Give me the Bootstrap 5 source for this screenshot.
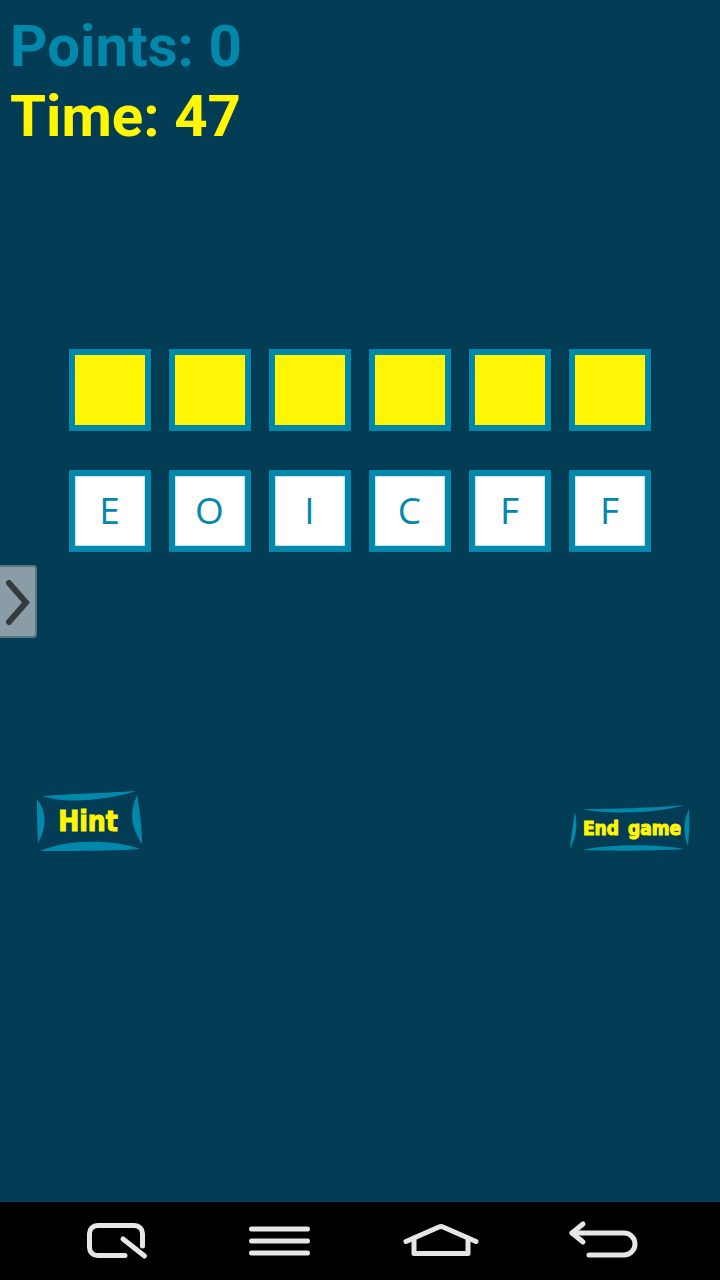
<!DOCTYPE html>
<html lang="en">
<head>
<meta charset="utf-8">
<title>Word game</title>
<link href="https://cdn.jsdelivr.net/npm/bootstrap@5.3.0/dist/css/bootstrap.min.css" rel="stylesheet">
<style>
html, body { height: 100%; }
body { background: #033d55; overflow: hidden; }
.game-screen { height: 1280px; position: relative; }
.game-main { min-height: 0; }
.score-box { padding: 11px 0 0 10px; font-family: Roboto, "Liberation Sans", sans-serif; font-weight: 700; font-size: 58.2px; line-height: 70px; }
.score-points { color: #0288ab; }
.score-time { color: #fff505; }
.tile-rows { margin-top: 198px; }
.tile-row + .tile-row { margin-top: 39px; }
.tile-gap { gap: 18px; }
.tile { width: 82px; height: 82px; border: 6px solid #0288ab; }
.tile-slot { background: #fff505; }
.tile-letter { background: #fff; color: #0288ab; font-family: "Open Sans", "Noto Sans", sans-serif; font-size: 37px; line-height: 1; padding: 0 1px 4px 0; box-shadow: inset 0 0 1px 1px rgba(2,136,171,.25); }
.drawer-tab { position: absolute; left: -3px; top: 565px; width: 40px; height: 73px; background: #8a9da6; border: 2px solid #5c7582; border-radius: 4px; }
.action-row { margin-top: 239px; padding: 0 30px 0 37px; }
.swoosh-btn { position: relative; padding: 0; border: 0; background: none; color: #fff505; font-family: "DejaVu Sans Condensed", "DejaVu Sans", sans-serif; font-weight: 700; -webkit-text-stroke: 1px #fff505; }
.swoosh-btn svg { position: absolute; inset: 0; }
.swoosh-btn svg path { fill: #0288ab; }
.btn-hint { width: 106px; height: 61px; font-size: 28px; line-height: 61px; padding-right: 4px; }
.btn-end { width: 120px; height: 48px; font-size: 19px; line-height: 48px; padding-left: 4px; word-spacing: 3px; }
.sys-bar { height: 78px; background: #000; }
.sys-item { width: 162px; }
.sys-item svg { fill: none; stroke: #e6e6e6; stroke-width: 5; stroke-linecap: round; stroke-linejoin: round; }
</style>
</head>
<body>
<div class="game-screen d-flex flex-column">
  <main class="game-main flex-grow-1">
    <div class="score-box">
      <div class="score-points">Points: 0</div>
      <div class="score-time">Time: 47</div>
    </div>
    <div class="tile-rows">
      <div class="tile-row d-flex justify-content-center tile-gap">
        <div class="tile tile-slot"></div><div class="tile tile-slot"></div><div class="tile tile-slot"></div>
        <div class="tile tile-slot"></div><div class="tile tile-slot"></div><div class="tile tile-slot"></div>
      </div>
      <div class="tile-row d-flex justify-content-center tile-gap">
        <div class="tile tile-letter d-flex align-items-center justify-content-center">E</div>
        <div class="tile tile-letter d-flex align-items-center justify-content-center">O</div>
        <div class="tile tile-letter d-flex align-items-center justify-content-center">I</div>
        <div class="tile tile-letter d-flex align-items-center justify-content-center">C</div>
        <div class="tile tile-letter d-flex align-items-center justify-content-center">F</div>
        <div class="tile tile-letter d-flex align-items-center justify-content-center">F</div>
      </div>
    </div>
    <div class="action-row d-flex justify-content-between align-items-end">
      <button type="button" class="swoosh-btn btn-hint">
        <svg width="106" height="61" viewBox="0 0 106 61"><path d="M5 5C30 3 70 2 99 0C75 8 30 14 5 5Z"/><path d="M0 8C10 20 10 36 1 52C0 36 0 22 0 8Z"/><path d="M100 4C92 22 94 36 105 53C105 36 103 20 100 4Z"/><path d="M3 60C30 48 75 48 103 58C75 60 30 60 3 60Z"/></svg>
        <span class="position-relative">Hint</span>
      </button>
      <button type="button" class="swoosh-btn btn-end">
        <svg width="120" height="48" viewBox="0 0 120 48"><path d="M12 5C40 5 85 4 114 1C90 9 40 11 12 5Z"/><path d="M5 8C8 22 6 34 0 45C1 32 3 20 5 8Z"/><path d="M119 5C113 18 113 30 118 42C119 30 120 18 119 5Z"/><path d="M13 46C40 40 85 40 114 45C85 47 40 47 13 46Z"/></svg>
        <span class="position-relative">End game</span>
      </button>
    </div>
  </main>
  <div class="drawer-tab d-flex align-items-center">
    <svg width="34" height="50" viewBox="0 0 34 50"><path d="M10 6L27 25.5L10 45" fill="none" stroke="#333b3e" stroke-width="6" stroke-linecap="round" stroke-linejoin="miter"/></svg>
  </div>
  <nav class="sys-bar d-flex justify-content-center align-items-center">
    <div class="sys-item d-flex justify-content-center">
      <svg width="80" height="78" viewBox="0 0 80 78"><path d="M48 53.5H20.5a8 8 0 0 1-8-8V31.5a8 8 0 0 1 8-8H57.5a8 8 0 0 1 8 8V44"/><path d="M46 37L67.5 54"/></svg>
    </div>
    <div class="sys-item d-flex justify-content-center">
      <svg width="80" height="78" viewBox="0 0 80 78"><path d="M12.5 27H68.5M12.5 39H68.5M12.5 51H68.5"/></svg>
    </div>
    <div class="sys-item d-flex justify-content-center">
      <svg width="80" height="78" viewBox="0 0 80 78"><path d="M5 39.5L38 25q2-1 4 0L75 39.5"/><path d="M13 36V51.5H67V36"/></svg>
    </div>
    <div class="sys-item d-flex justify-content-center">
      <svg width="80" height="78" viewBox="0 0 80 78"><path d="M20 22L9 31L20 40"/><path d="M9 31H61a11 11 0 0 1 0 22H26"/></svg>
    </div>
  </nav>
</div>
<script src="https://cdn.jsdelivr.net/npm/bootstrap@5.3.0/dist/js/bootstrap.bundle.min.js"></script>
</body>
</html>
